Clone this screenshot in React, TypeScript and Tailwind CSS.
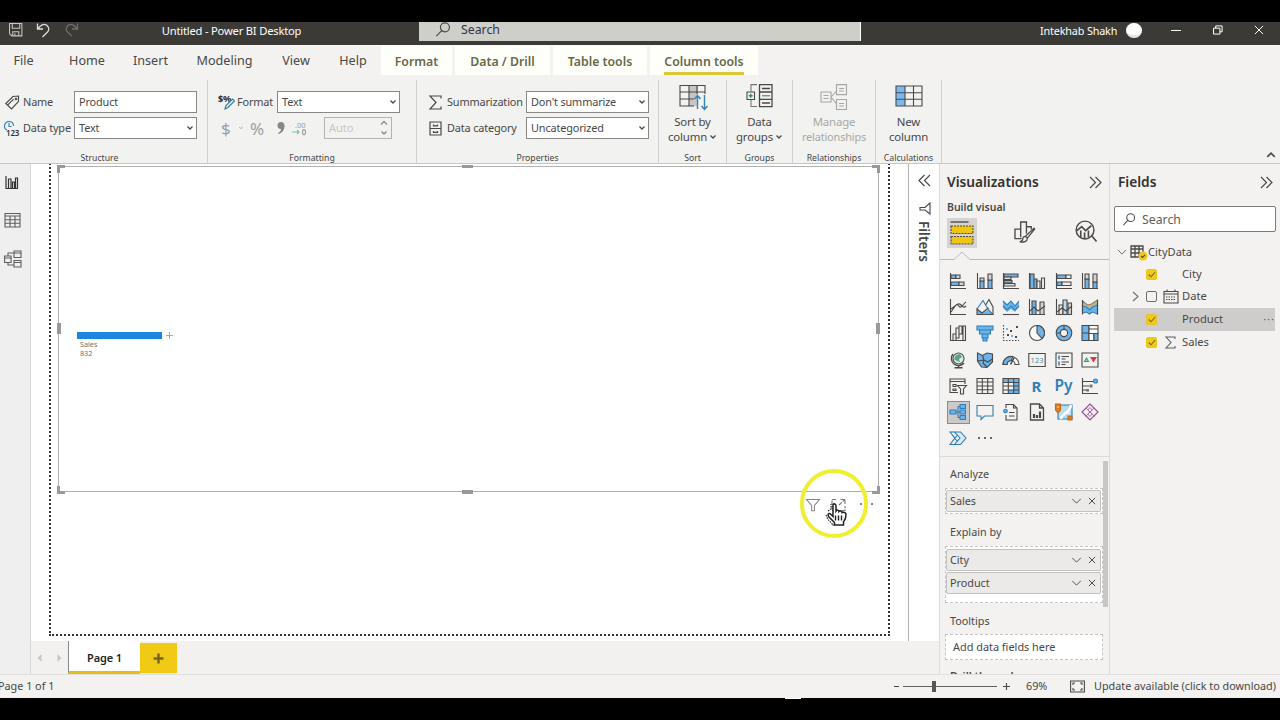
import type { ReactNode } from 'react';
import { clsx } from 'clsx';

const INK = '#4a4948';
const BLUE = '#6bb3ea';
const BLUE_DARK = '#2e7fb8';

type IconProps = {
  children: ReactNode;
  className?: string;
  stroke?: string;
  box?: string;
};

function Icon({ children, className = 'h-[18px] w-[18px]', stroke = INK, box = '0 0 18 18' }: IconProps) {
  return (
    <svg className={clsx('block shrink-0 overflow-visible', className)} viewBox={box} fill="none" stroke={stroke} strokeWidth={1.1}>
      {children}
    </svg>
  );
}

function Caret({ className = 'h-1.5 w-2', up = false }: { className?: string; up?: boolean }) {
  return (
    <Icon className={className} box="0 0 8 6">
      <path d={up ? 'M1 4.5l3-3 3 3' : 'M1.5 1.5L4 4l2.5-2.5'} strokeWidth={1.3} />
    </Icon>
  );
}

function DoubleChevron({ flip = false }: { flip?: boolean }) {
  return (
    <Icon className={clsx('h-[13px] w-[13px]', flip && 'rotate-180')} box="0 0 13 13">
      <path d="M1 1l5.5 5.5L1 12M6.5 1L12 6.5 6.5 12" strokeWidth={1.2} />
    </Icon>
  );
}

function SearchGlyph({ className }: { className: string }) {
  return (
    <Icon className={className} box="0 0 14 14">
      <circle cx="8.8" cy="5" r="4.2" />
      <path d="M5.8 8L.8 13.2" />
    </Icon>
  );
}

function TitleBar() {
  return (
    <header className="flex h-[23px] bg-[#3b3a36] text-white">
      <div className="flex w-[100px] items-start gap-[13px] pl-[9px] pt-px">
        <Icon className="h-[14px] w-[14px]" stroke="#c8c6c4" box="0 0 15 15">
          <path d="M.6.6h13.2v13.2H3L.6 11.5zM3.500.6v5h8V.6M4 13.800V9.300h6.500v4.500M6.300 11v2.800" />
        </Icon>
        <Icon className="h-[15px] w-[15px]" stroke="#e1dfdd" box="0 0 15 15">
          <path d="M1.500 .500v5.500h5.500M1.500 6C4.500 2 8 0 11 2.500c3 2.700 2 5.500-.500 7.500L6.500 14" strokeWidth={1.3} />
        </Icon>
        <Icon className="h-[15px] w-[15px]" stroke="#6f6e6b" box="0 0 15 15">
          <path d="M13.500 .500v5.500H8M13.500 6C10.500 2 7 0 4 2.500c-3 2.700-2 5.500.500 7.500L8 13" strokeWidth={1.3} />
        </Icon>
      </div>
      <div className="w-[263px] text-center text-[11.2px] leading-[18px] tracking-[-0.2px]">Untitled - Power BI Desktop</div>
      <div className="ml-14 flex h-[19px] w-[442px] items-start gap-[10px] border-r border-white bg-[#cfcfca] pl-4 text-[#33334a]">
        <SearchGlyph className="h-[15px] w-4" />
        <span className="text-[12.3px] leading-4">Search</span>
      </div>
      <div className="ml-[179px] w-[80px] whitespace-nowrap text-[10.8px] leading-[17px] tracking-[-0.15px]">Intekhab Shakh</div>
      <div className="ml-[6px] mt-[1px] h-[15px] w-4 rounded-full border-b-[3px] border-[#e3e3ea] bg-white" />
      <div className="ml-[29px] mt-[8px] h-px w-[10px] bg-white" />
      <Icon className="ml-8 mt-[3px] h-[10px] w-[10px]" stroke="#fff" box="0 0 11 11">
        <path d="M.6 3.500h7v6.500h-7zM3 3.500V1h7v6.500H7.600" />
      </Icon>
      <Icon className="ml-[31px] mt-[3px] h-[10px] w-[10px]" stroke="#fff" box="0 0 11 11">
        <path d="M1 1l9 9M10 1l-9 9" />
      </Icon>
    </header>
  );
}

const CONTEXT_TABS = [
  { label: 'Format', width: 'w-[71px]' },
  { label: 'Data / Drill', width: 'w-[95px]' },
  { label: 'Table tools', width: 'w-[94px]' },
  { label: 'Column tools', width: 'w-[108px]' },
];

const MENU_TABS = [
  { label: 'File', width: 'w-[47px] mr-2' },
  { label: 'Home', width: 'w-16' },
  { label: 'Insert', width: 'w-[63px]' },
  { label: 'Modeling', width: 'w-[85px]' },
  { label: 'View', width: 'w-[58px]' },
  { label: 'Help', width: 'w-14' },
];

function MenuTabs() {
  return (
    <nav className="flex h-[35px] border-t border-[#fafaf7] bg-[#f3f2f0] text-[12.6px] leading-[30px]">
      {MENU_TABS.map((tab) => (
        <div key={tab.label} className={clsx('text-center', tab.width)}>
          {tab.label}
        </div>
      ))}
      <div className="flex gap-[3px]">
        {CONTEXT_TABS.map((tab) => (
          <div key={tab.label} className={clsx('flex h-[29px] justify-center bg-[#fffffa] font-semibold text-[#66694a]', tab.width)}>
            <span
              className={clsx(
                'h-[29px] whitespace-nowrap text-[12.3px] leading-[31px]',
                tab.label === 'Column tools' && 'border-b-[3px] border-[#d8c832]',
              )}
            >
              {tab.label}
            </span>
          </div>
        ))}
      </div>
    </nav>
  );
}

function Group({ label, width, children }: { label: string; width: string; children: ReactNode }) {
  return (
    <section className={clsx('flex h-[83px] shrink-0 flex-col border-r border-[#d2d0ce]', width)}>
      <div className="h-[73px]">{children}</div>
      <div className="whitespace-nowrap text-center text-[8.7px] leading-[10px] text-[#484644]">{label}</div>
    </section>
  );
}

function Field({ icon, label, labelWidth, value, width, caret = true }: {
  icon: ReactNode;
  label: string;
  labelWidth: string;
  value: string;
  width: string;
  caret?: boolean;
}) {
  return (
    <div className="flex h-[22px] items-center text-[10.9px] tracking-[-0.15px]">
      <div className="w-[18px]">{icon}</div>
      <div className={clsx('whitespace-nowrap', labelWidth)}>{label}</div>
      <div className={clsx('flex h-[22px] items-center justify-between border border-[#8a8886] bg-white pl-[4px] pr-[2px]', width)}>
        {value}
        {caret && <Caret />}
      </div>
    </div>
  );
}

function BigButton({ icon, lines, caret = false, disabled = false }: {
  icon: ReactNode;
  lines: [string, string];
  caret?: boolean;
  disabled?: boolean;
}) {
  return (
    <div className={clsx('flex flex-col items-center pt-1 text-[11.4px] leading-[15px] tracking-[-0.15px]', disabled && 'text-[#a9a7a5]')}>
      <div className="mb-[2px] h-7">{icon}</div>
      <span>{lines[0]}</span>
      <span className={clsx('flex items-center gap-0.5 whitespace-nowrap', disabled && 'text-[10.9px]')}>
        {lines[1]}
        {caret && <Caret className="h-1.5 w-2" />}
      </span>
    </div>
  );
}

function Ribbon() {
  return (
    <div className="flex h-[84px] border-b border-[#c8c6c4] bg-[#f2f2f1]">
      <Group label="Structure" width="w-[208px] [&>div:last-child]:pr-2">
        <div className="flex flex-col gap-1 pl-[5px] pt-[11px]">
          <Field
            icon={
              <Icon className="h-[15px] w-[15px]" box="0 0 15 15">
                <path d="M.800 8.500L8 1.500l5.500-.500v5.500L6.500 14z" />
                <circle cx="11" cy="4" r=".8" />
                <path d="M2.600 10.200l6-6" />
              </Icon>
            }
            label="Name"
            labelWidth="w-[51px]"
            value="Product"
            width="w-[123px]"
            caret={false}
          />
          <Field
            icon={
              <Icon className="-ml-0.5 h-[17px] w-[17px]" box="0 0 17 17">
                <path d="M4 10A4.500 4.500 0 1 1 10.500 6M6 3v3.500h2.500" stroke={BLUE_DARK} />
                <text x="3" y="15.500" fontSize="8" fontWeight="600" fill="#333" stroke="none">
                  123
                </text>
              </Icon>
            }
            label="Data type"
            labelWidth="w-[51px]"
            value="Text"
            width="w-[123px]"
          />
        </div>
      </Group>
      <Group label="Formatting" width="w-[209px]">
        <div className="flex flex-col gap-1 pl-[11px] pt-[11px]">
          <Field
            icon={
              <Icon className="h-[17px] w-[17px]" box="0 0 17 17">
                <text x="-1" y="8" fontSize="9" fontWeight="800" fill="#333" stroke="none">
                  $%
                </text>
                <path d="M6 15l1-3.500L13.500 5 15.500 7 9 13.500z" fill="#d8edf5" stroke="#347d96" />
              </Icon>
            }
            label="Format"
            labelWidth="w-10"
            value="Text"
            width="w-[123px]"
          />
          <div className="flex h-[22px] items-center text-[#a09e9c]">
            <span className="w-[19px] pl-0.5 text-[17px] leading-none">$</span>
            <Caret className="h-1 w-1.5 opacity-50" />
            <span className="ml-1.5 w-[27px] text-[17px] leading-none">%</span>
            <svg className="h-3 w-2 shrink-0" viewBox="0 0 8 12" fill="#8a8886">
              <path d="M4 0a3.500 3.500 0 0 1 3.500 4C7.500 8 5 11 1.500 12l-.500-1c2-1 3-2.500 3-4A3.500 3.500 0 1 1 4 0z" />
            </svg>
            <Icon className="ml-[7px] h-[15px] w-[15px]" box="0 0 15 15">
              <text x="3" y="7" fontSize="7.5" fill="#a09e9c" stroke="none">
                .00
              </text>
              <path d="M0 11h7M5 9l2 2-2 2" stroke="#7fc0ae" />
              <ellipse cx="12" cy="11.200" rx="1.500" ry="2.600" stroke="#a09e9c" />
            </Icon>
            <div className="ml-[17px] flex h-[22px] w-[68px] items-center justify-between border border-[#b5b3b1] pl-1 pr-[3px] text-[11px] text-[#c8c6c4]">
              Auto
              <span className="flex flex-col gap-1 opacity-60">
                <Caret up />
                <Caret />
              </span>
            </div>
          </div>
        </div>
      </Group>
      <Group label="Properties" width="w-[242px]">
        <div className="flex flex-col gap-1 pl-[12px] pt-[11px]">
          <Field
            icon={
              <Icon className="h-[15px] w-[13px]" box="0 0 13 15">
                <path d="M12 3.500V1H1l6 6.500L1 14h11v-2.500" strokeWidth={1.200} />
              </Icon>
            }
            label="Summarization"
            labelWidth="w-[79px]"
            value="Don't summarize"
            width="w-[123px]"
          />
          <Field
            icon={
              <Icon className="h-[15px] w-[13px]" box="0 0 13 15">
                <path d="M1 1h11v13H1zM1 7.500h11M4.500 3.500v1.300h4V3.500M4.500 10v1.300h4V10" strokeWidth={1.200} />
              </Icon>
            }
            label="Data category"
            labelWidth="w-[79px]"
            value="Uncategorized"
            width="w-[123px]"
          />
        </div>
      </Group>
      <Group label="Sort" width="w-[68px]">
        <BigButton
          lines={['Sort by', 'column']}
          caret
          icon={
            <Icon className="h-7 w-[30px]" box="0 0 30 28">
              <path d="M11 1h9v21h-9z" fill="#c8c6c4" stroke="none" />
              <path d="M27 10V1.500H2V22h14M2 8h25M2 15h14M11 1.500V22M19 1.500V10" />
              <path d="M19.500 25V12M16.500 15l3-3.500 3 3.500M26.500 11v14M23.500 22l3 3.500 3-3.500" stroke="#3784ae" strokeWidth={1.400} />
            </Icon>
          }
        />
      </Group>
      <Group label="Groups" width="w-[66px]">
        <BigButton
          lines={['Data', 'groups']}
          caret
          icon={
            <Icon className="h-7 w-7" box="0 0 28 28">
              <path d="M13.500.600h12.500v22H13.500zM13.500 8h12.500M13.500 15.300h12.500M16 4.500h8M16 19h8" strokeWidth={1.300} />
              <path d="M16 11.800h8" stroke="#37866d" />
              <path d="M11 .600H5v7M11 22.500H5v-7" stroke="#777" />
              <path d="M1 8h7.500v7.500H1z" />
              <path d="M4.700 9.800v4M2.700 11.800h4" stroke="#37866d" strokeWidth={1.400} />
            </Icon>
          }
        />
      </Group>
      <Group label="Relationships" width="w-[83px]">
        <BigButton
          lines={['Manage', 'relationships']}
          disabled
          icon={
            <Icon className="h-7 w-7" box="0 0 28 28" stroke="#a8a6a4">
              <path d="M1 8h10v10H1zM16.500.600h10v10h-10zM16.500 15.500h10v10h-10zM3.500 14.500h5M19 7h5M19 22h5M3.500 11.500h5M19 4.500h5M19 19.500h5M11 13l5.500-6M11 13l5.500 7" />
            </Icon>
          }
        />
      </Group>
      <Group label="Calculations" width="w-[66px]">
        <BigButton
          lines={['New', 'column']}
          icon={
            <Icon className="h-7 w-7" box="0 0 28 28">
              <path d="M1 2h9v20H1z" fill="#78baf0" stroke="none" />
              <path d="M1 2h26v20H1zM1 8.700h26M1 15.300h26M10 2v20M18.500 2v20" />
            </Icon>
          }
        />
      </Group>
      <div className="flex flex-1 items-end justify-end pb-1 pr-1">
        <Caret className="h-2 w-2.5" up />
      </div>
    </div>
  );
}

function ViewRail() {
  return (
    <aside className="flex w-[31px] shrink-0 flex-col gap-[21px] border-r border-[#d8d6d4] bg-[#f0efef] pl-1 pt-[10px]">
      <Icon className="h-[17px] w-[17px]" box="0 0 17 17" stroke="#333">
        <path d="M2 2v12.500h12M4.500 14V5H7V14M8.500 14V8h2v6M11.500 14V4h2v10" strokeWidth={1.200} />
      </Icon>
      <Icon className="h-[17px] w-[17px]" box="0 0 17 17" stroke="#605e5c">
        <path d="M1 1.500h15v13.500H1zM1 4h15M1 7.700h15M1 11.300h15M6 4v11M11 4v11" />
      </Icon>
      <Icon className="h-[18px] w-[18px]" box="0 0 18 18" stroke="#605e5c">
        <path d="M.600 6h6.500v6.500H.600zM10 1h7v6.500h-7zM10 10.500h7V17h-7zM.600 8h6.500M10 3h7M10 12.500h7M4 6V3h6M4 12.500V15h6" />
      </Icon>
    </aside>
  );
}

const HANDLES = [
  '-left-[2px] -top-[2px] h-2 w-2 border-l-[3px] border-t-[3px]',
  '-right-[2px] -top-[2px] h-2 w-2 border-r-[3px] border-t-[3px]',
  '-left-[2px] -bottom-[3px] h-2 w-2 border-l-[3px] border-b-[3px]',
  '-right-[2px] -bottom-[3px] h-2 w-2 border-r-[3px] border-b-[3px]',
  'left-[403px] -top-[2px] h-[3px] w-[11px] border-t-[3px]',
  'left-[403px] -bottom-[3px] h-1 w-[11px] border-b-4',
  '-left-[2px] top-[156px] h-[11px] w-1 border-l-4',
  '-right-[2px] top-[156px] h-[11px] w-1 border-r-4',
];

function Canvas() {
  return (
    <main className="relative h-[477px] w-[877px] shrink-0 overflow-hidden bg-white">
      <div className="absolute -top-1 left-[18px] h-[476px] w-[841px] border-2 border-dotted border-[#333]" />
      <div className="absolute left-[27px] top-[2px] h-[326px] w-[821px] border border-[#b0b0b0]">
        {HANDLES.map((handle) => (
          <span key={handle} className={clsx('absolute border-[#999]', handle)} />
        ))}
        <div className="absolute left-[18px] top-[165px] h-[7px] w-[85px] bg-[#1a86e2]" />
        <svg className="absolute left-[106px] top-[164px] h-[9px] w-[9px]" viewBox="0 0 9 9" stroke="#aaa" strokeWidth={1}>
          <path d="M4.500 1v7M1 4.500h7" />
        </svg>
        <div className="absolute left-[21px] top-[173px] text-[7.200px] leading-[9px] text-[#706e6c]">
          Sales
          <br />
          832
        </div>
      </div>
      <Icon className="absolute left-[774px] top-[334px] h-[15px] w-4" box="0 0 17 16" stroke="#8a8886">
        <path d="M1.500 1.500h14L10 8v5.500H7V8z" />
      </Icon>
      <Icon className="absolute left-[799px] top-[334px] h-[14px] w-4" box="0 0 16 14" stroke="#777">
        <path d="M6 1.500H2v11h13V8M9 7l6-5.500M10.500 1.500H15V6" strokeDasharray="4 1" />
      </Icon>
      <div className="absolute left-[829px] top-[339px] flex gap-[9px]">
        <span className="h-0.5 w-0.5 bg-[#888]" />
        <span className="h-0.5 w-0.5 bg-[#888]" />
      </div>
      <div className="absolute left-[769px] top-[305px] h-[69px] w-[68px] rounded-full border-4 border-[#f0ee30]" />
      <Icon className="absolute left-[794px] top-[338px] h-[24px] w-[24px]" box="0 0 24 24" stroke="#222">
        <path
          d="M8 2.500c1.500-1.500 3 0 3 1.500v5c1-1.500 3-1 3 .500 1-1 3-.500 3 1 1.500-.800 4 0 4 2 0 4-.500 5-2.500 7.500V23h-9v-2.500L4 15c-2-3 0-4.500 2-2.500l2 2z"
          fill="#fff"
          strokeWidth={1.500}
        />
        <path d="M10.500 13.500v5M13.500 13.500v5M16.500 13.500v5" strokeWidth={1.400} />
        <path d="M1 13l2 4.500 4 4V23h3M3 9l3-2V2" strokeDasharray="1.500 1" />
      </Icon>
    </main>
  );
}

function FiltersRail() {
  return (
    <aside className="flex w-[31px] shrink-0 flex-col items-center border-l border-[#b3b0ad] bg-white pt-[10px]">
      <DoubleChevron flip />
      <Icon className="ml-0.5 mt-[15px] h-[13px] w-3" box="0 0 12 13">
        <path d="M11 1v11L6 8H1V5.500h5z" />
      </Icon>
      <span className="mt-[6px] text-[13.500px] font-semibold leading-4 [writing-mode:vertical-rl]">Filters</span>
    </aside>
  );
}

function PageTabs() {
  return (
    <div className="flex h-[33px] bg-[#f2f1f0]">
      <div className="flex w-[37px] items-center justify-between px-[6px]">
        <Icon className="h-2 w-[5px]" box="0 0 5 8" stroke="none">
          <path d="M4.500 0v8L.500 4z" fill="#cac8c6" />
        </Icon>
        <Icon className="h-2 w-[5px]" box="0 0 5 8" stroke="none">
          <path d="M.500 0v8l4-4z" fill="#cac8c6" />
        </Icon>
      </div>
      <div className="h-[33px] w-[72px] border-b-[3px] border-l border-b-[#e6bd18] border-l-[#888] bg-white text-center text-[11px] font-semibold leading-[34px] tracking-[-0.15px] text-[#252423]">
        Page 1
      </div>
      <div className="mt-0.5 flex h-[30px] w-[37px] items-center justify-center bg-[#f0ca14]">
        <Icon className="h-[11px] w-[11px]" box="0 0 11 11" stroke="#75672a">
          <path d="M5.500.500v10M.500 5.500h10" strokeWidth={2.500} />
        </Icon>
      </div>
    </div>
  );
}

const AXIS = 'M1.500 1v15.500H17';

const VISUALS: { name: string; art: ReactNode }[] = [
  {
    name: 'stacked bar',
    art: (
      <>
        <path d="M2 3h5v3.500H2zM2 10h8v3.500H2z" fill={BLUE} />
        <path d="M7 3h4v3.500H7zM10 10h5v3.500h-5z" fill="#d5d3d1" />
        <path d={AXIS} />
      </>
    ),
  },
  {
    name: 'stacked column',
    art: (
      <>
        <path d="M4 9h4v7.500H4zM12 8h4v8.500h-4z" fill={BLUE} />
        <path d="M4 6h4v3H4zM12 2h4v6h-4z" fill="#d5d3d1" />
        <path d={AXIS} />
      </>
    ),
  },
  {
    name: 'clustered bar',
    art: (
      <>
        <path d="M2 2h14v3H2zM2 8.500h8v2.500H2z" fill={BLUE} />
        <path d="M2 5h7v2.500H2zM2 11.500h11V14H2z" fill="#e6e0d0" />
        <path d={AXIS} />
      </>
    ),
  },
  {
    name: 'clustered column',
    art: (
      <>
        <path d="M2 2h4v14.500H2zM6 7h3v9.500H6z" fill={BLUE} />
        <path d="M9 9h3v7.500H9zM13.500 6h3v10.500h-3z" fill="#eee" />
        <path d={AXIS} />
      </>
    ),
  },
  {
    name: 'full stacked bar',
    art: (
      <>
        <path d="M2 3h9v3.500H2zM2 10h5v3.500H2z" fill={BLUE} />
        <path d="M11 3h5v3.500h-5zM7 10h9v3.500H7z" fill="#eee" />
        <path d={AXIS} />
      </>
    ),
  },
  {
    name: 'full stacked column',
    art: (
      <>
        <path d="M4 7h4v9.500H4zM12 10h4v6.500h-4z" fill={BLUE} />
        <path d="M4 2h4v5H4zM12 2h4v8h-4z" fill="#d5d3d1" />
        <path d={AXIS} />
      </>
    ),
  },
  {
    name: 'line',
    art: (
      <>
        <path d={AXIS} />
        <path d="M2 14l5-7c2-2 3 3 5 2s3-4 5-5M2 11l4-3c2-2 4-3 6-1s3 3 5 1" />
      </>
    ),
  },
  {
    name: 'area',
    art: (
      <>
        <path d="M7 16l5.500-14L17 12v4z" fill="#eee" stroke="none" />
        <path d="M1 11l5.500 4 5.500-3 5 4.500H1z" fill={BLUE} stroke="none" />
        <path d="M1 11l6-8.500L12.500 12l4.500 4.500" stroke={BLUE_DARK} />
        <path d="M9.500 7L13 1.500l4 7.500v7.500H1V11l5 4 6.500-5" />
      </>
    ),
  },
  {
    name: 'stacked area',
    art: (
      <>
        <path d="M1 3l4 4 4-4 4 5 4-5v6l-4 5-4-3-4 3-4-4z" fill={BLUE} stroke="none" />
        <path d="M1 3l4 4 4-4 4 5 4-5M1 8l4 4 4-4 4 4 4-4" stroke={BLUE_DARK} />
        <path d="M1 16.500h16" />
      </>
    ),
  },
  {
    name: 'line and column',
    art: (
      <>
        <path d="M4 3h4v13.500H4z" fill={BLUE} />
        <path d="M12 4h4v12.500h-4z" fill="#d5d3d1" />
        <path d={AXIS} />
        <path d="M2 13l4-4 4 4 7-5" />
      </>
    ),
  },
  {
    name: 'line and clustered column',
    art: (
      <>
        <path d="M4 7h4v9.500H4z" fill="#e5e3e1" />
        <path d="M8 2h4v14.500H8z" fill="#bcdcf3" />
        <path d="M13 5h3.500v11.500H13z" fill="#d5d3d1" />
        <path d={AXIS} />
        <path d="M2 14l5-4 4 3 6-5" />
      </>
    ),
  },
  {
    name: 'ribbon',
    art: (
      <>
        <path d="M1.500 3l5 4 4-1 6-4v6l-5 5-4-1-6 1z" fill="#c6b48f" stroke="#8a8060" />
        <path d="M1.500 8l4 1 3 3 3-3 5-2v9l-5-2-3 2-3-2-4 1z" fill={BLUE} stroke={BLUE_DARK} />
        <path d="M1.500 2v14.500M16.500 2v14.500" />
      </>
    ),
  },
  {
    name: 'waterfall',
    art: (
      <>
        <path d="M4 10h3v6.500H4zM7 4h3v10H7zM10 2h3v8h-3zM14 2h2.500v14.500H14z" fill="#eee" />
        <path d={AXIS} />
      </>
    ),
  },
  {
    name: 'funnel',
    art: (
      <path d="M1 2h16v4H1zM3.500 6h11v4h-11zM6 10h6v4H6zM7 14h4v3H7z" fill={BLUE} stroke={BLUE_DARK} />
    ),
  },
  {
    name: 'scatter',
    art: (
      <>
        <path d={AXIS} strokeDasharray="1.500 1.500" />
        <path d="M5 10h2v2H5zM8 6h2v2H8zM14 2h2v2h-2zM13 12h2v2h-2z" fill={INK} stroke="none" />
        <path d="M9 11h2v2H9zM4 4h2v2H4z" fill={BLUE} stroke="none" />
      </>
    ),
  },
  {
    name: 'pie',
    art: (
      <>
        <circle cx="9" cy="9" r="7.500" fill="#fafafa" />
        <path d="M9 1.500a7.500 7.500 0 0 1 5 13L9 9z" fill={BLUE} />
      </>
    ),
  },
  {
    name: 'donut',
    art: (
      <>
        <circle cx="9" cy="9" r="5.800" stroke={BLUE} strokeWidth={4} />
        <circle cx="9" cy="9" r="7.800" />
        <circle cx="9" cy="9" r="3.600" fill="#f3f2f1" />
        <path d="M9 1.200v4.200M1.500 9h4" />
      </>
    ),
  },
  {
    name: 'treemap',
    art: (
      <>
        <path d="M1 1.500h7v15H1z" fill={BLUE} />
        <path d="M8 1.500h9v8H8zM8 9.500h5v7H8z" fill="#fff" />
        <path d="M13 9.500h4v7h-4zM8 5h9M1 9h7" fill={BLUE} />
      </>
    ),
  },
  {
    name: 'map',
    art: (
      <>
        <circle cx="9.500" cy="7.500" r="5.500" fill="#d9eee3" />
        <path d="M7 4l4-1 2 3-3 2 1 3-3-1-3-2z" fill="#5fa287" stroke="none" />
        <path d="M4 3a7 7 0 1 0 11 9M9.500 14.500v2M5.500 16.700h8" strokeWidth={1.400} />
      </>
    ),
  },
  {
    name: 'filled map',
    art: (
      <>
        <path d="M1.500 2l5 2.500L11 2l5.500 1v8L11 16.500 5.500 16l-4-6z" fill={BLUE} />
        <path d="M6.500 4.500L8 9l-6.500 1M8 9l4 2 4.500-3M8 9l-1 3 4 4" />
      </>
    ),
  },
  {
    name: 'gauge',
    art: (
      <>
        <path d="M1 13.500a8 8 0 0 1 16 0h-4a4 4 0 0 0-8 0z" fill="#f5f5f5" />
        <path d="M1 13.500a8 8 0 0 1 10-7.800l-2 4a4 4 0 0 0-4 3.800z" fill={BLUE} />
        <path d="M8.500 13.500L12 7" strokeWidth={1.500} />
      </>
    ),
  },
  {
    name: 'card',
    art: (
      <>
        <path d="M.800 2.500h16.400v13H.800z" />
        <text x="2.600" y="12" fontSize="7.500" fill="#5b8799" stroke="none">
          123
        </text>
      </>
    ),
  },
  {
    name: 'multi-row card',
    art: (
      <>
        <path d="M1 2h16v14.500H1z" />
        <path d="M4 4.500v4M4 10.500v4" stroke={BLUE_DARK} strokeWidth={1.500} />
        <path d="M6.500 5.500H14M6.500 8h4M6.500 11h7.500M6.500 13.500h4" />
      </>
    ),
  },
  {
    name: 'kpi',
    art: (
      <>
        <path d="M1 2h16v14H1z" />
        <path d="M3.500 10.500l2-3.500 2 3.500z" fill="#a5d3bb" stroke="#3f9a6c" />
        <path d="M10 6.500h5l-2.500 4z" fill="#cf3f4b" stroke="#cf3f4b" />
      </>
    ),
  },
  {
    name: 'slicer',
    art: (
      <>
        <path d="M9 15.500H1V2h15v5M1 4.500h15M4 7.500h3v2H4zM4 12h3v1.500H4z" />
        <path d="M8.500 8.500h9L14.500 12v5h-3v-5z" fill="#f3f2f1" />
      </>
    ),
  },
  {
    name: 'table',
    art: <path d="M1 1.500h16v15H1zM1 5h16M1 9h16M1 12.800h16M6.300 1.500v15M11.700 1.500v15" />,
  },
  {
    name: 'matrix',
    art: (
      <>
        <path d="M1 1.500h16v4H1zM11.500 5.500H17v11h-5.500zM6 13h5.500v3.500H6z" fill={BLUE} stroke="none" />
        <path d="M1 1.500h16v15H1zM1 5.500h16M1 9h16M1 13h16M6.300 1.500v15M11.700 1.500v15" />
      </>
    ),
  },
  {
    name: 'r visual',
    art: (
      <text x="3.500" y="14.500" fontSize="15" fontWeight="700" fill={BLUE_DARK} stroke="none">
        R
      </text>
    ),
  },
  {
    name: 'python visual',
    art: (
      <text x="-.500" y="14" fontSize="15.500" fontWeight="600" fill={BLUE_DARK} stroke="none">
        Py
      </text>
    ),
  },
  {
    name: 'key influencers',
    art: (
      <>
        <path d={AXIS} />
        <path d="M2 4.500h10M2 9h6M2 13h3" />
        <circle cx="14.500" cy="4" r="2" stroke={BLUE_DARK} fill={BLUE} />
        <path d="M8.500 7.500h3v3h-3zM5 12h3v2.500H5z" fill="#777" stroke="none" />
      </>
    ),
  },
  {
    name: 'decomposition tree',
    art: (
      <>
        <path d="M1 7h6v4H1zM11 1.500h5.500v4H11zM11 7h5.500v4H11zM11 12.500h5.500v4H11z" fill={BLUE} stroke={BLUE_DARK} />
        <path d="M7 9h4M9 9V3.500h2M9 9v5.500h2" stroke={BLUE_DARK} />
      </>
    ),
  },
  {
    name: 'q and a',
    art: <path d="M1 2.500h16v10.500H8.500L5 16.500V13H1z" stroke="#347fae" />,
  },
  {
    name: 'narrative',
    art: (
      <>
        <path d="M4 5V1.500h7.500L15 5v12H4v-5M11.500 1.500V5H15M7 9.500h5.500M7 13h5.500" />
        <circle cx="3.500" cy="8" r="1.800" stroke={BLUE_DARK} fill={BLUE} />
      </>
    ),
  },
  {
    name: 'paginated report',
    art: (
      <>
        <path d="M2.500 1h9l4 4v12h-13zM11.500 1v4h4" strokeWidth={1.300} />
        <path d="M6 15v-4M9 15v-3M12 15V8.500" strokeWidth={2.200} />
      </>
    ),
  },
  {
    name: 'arcgis map',
    art: (
      <>
        <path d="M3 2h14v14H3z" fill="#b5dcf3" stroke={BLUE_DARK} />
        <path d="M6 16c0-6 9-5 10-14" stroke="#fff" strokeWidth={2.500} />
        <path d="M.500 1h5v6L3 10 .500 7zM13 13h4v4h-4z" fill="#dc7c22" stroke="#c56b18" />
        <path d="M2.500 3.500h1.200v1.200H2.500zM13 9.500h1.500V11H13z" fill="#fff" stroke="none" />
      </>
    ),
  },
  {
    name: 'power apps',
    art: (
      <>
        <path d="M9 1l8 8-8 8-8-8z" stroke="#9b4f96" strokeWidth={1.200} />
        <path d="M9 4.500L11.200 7 9 9.200 6.800 7zM9 13.500L11.200 11 9 8.800 6.800 11zM5 5l8.500 8.500M13 5l-8.500 8.500" stroke="#a863a3" strokeWidth={0.900} />
      </>
    ),
  },
  {
    name: 'power automate',
    art: (
      <>
        <path d="M5.500 3h6l5.500 6-5.500 6.500H5.500L11 9z" fill="#dcebf5" stroke={BLUE_DARK} />
        <path d="M5.500 3H1l5 6-5 6.500h4.500M1 3l7 9M1 15.500L8.500 6" stroke={BLUE_DARK} />
      </>
    ),
  },
];

function Chip({ label }: { label: string }) {
  return (
    <div className="flex h-[22px] shrink-0 items-center rounded-[2px] border border-[#c4c2c0] bg-[#ebeae9] pl-[3px] pr-[4px] text-[10.800px]">
      <span className="flex-1">{label}</span>
      <Icon className="mr-[6px] h-[6px] w-[11px]" box="0 0 12 7">
        <path d="M1 1l5 5 5-5" />
      </Icon>
      <Icon className="h-2 w-2" box="0 0 9 9">
        <path d="M1 1l7 7M8 1L1 8" />
      </Icon>
    </div>
  );
}

function Well({ title, className, children }: { title: string; className: string; children: ReactNode }) {
  return (
    <>
      <div className="pl-[5px] text-[10.800px] leading-[18px]">{title}</div>
      <div className={clsx('flex flex-col gap-[1px] border border-dashed border-[#c8c6c4] bg-white', className)}>{children}</div>
    </>
  );
}

function VisualizationsPane() {
  return (
    <aside className="flex w-[170px] shrink-0 flex-col overflow-hidden border-l border-[#dddbd9] bg-[#f3f2f1]">
      <div className="flex h-9 shrink-0 items-center justify-between pl-[7px] pr-[7px]">
        <h2 className="text-[13.700px] font-semibold text-[#323130]">Visualizations</h2>
        <DoubleChevron />
      </div>
      <div className="pl-[7px] text-[10.500px] font-semibold leading-[14px]">Build visual</div>
      <div className="flex items-start pl-[7px] pt-1">
        <div className="flex h-[30px] w-[30px] items-center justify-center bg-[#d6d4d2]">
          <Icon className="h-[26px] w-6" box="0 0 24 26">
            <path d="M.500 2h18" strokeWidth={2} stroke="#777" />
            <path d="M1 6h22v7.500H1zM1 16.500h22V24H1z" fill="#f0c514" strokeDasharray="2 1" />
          </Icon>
        </div>
        <Icon className="ml-[37px] mt-[3px] h-[22px] w-[22px]" box="0 0 23 23">
          <path d="M8 18.500H1V8.500h6V1h6v12M13 6h5v3M7 8.500V17" strokeWidth={1.400} />
          <path d="M21.500 7L12 16M22 8l-8 10M12 16c-2 0-3 2-3 4-1 1.500-2 1.500-3 1.500 4 1.500 8 0 8-3.500z" strokeWidth={1.300} />
        </Icon>
        <Icon className="ml-[39px] mt-[2px] h-[23px] w-[23px]" box="0 0 24 24">
          <circle cx="10.500" cy="10.500" r="9.300" strokeWidth={1.500} />
          <path d="M2 11l5-4 4 4 6-5M6 11v7M10 13v6M14 11v7M17 16l5.500 6.500" strokeWidth={1.700} />
        </Icon>
      </div>
      <svg className="block h-3 w-[169px] shrink-0" viewBox="0 0 169 12" fill="none" stroke="#bbb9b7">
        <path d="M0 11.500h14l8-7.500 8 7.500h139" />
      </svg>
      <div className="grid shrink-0 auto-rows-[26.200px] grid-cols-[repeat(6,26.400px)] pl-[5px] pt-2">
        {VISUALS.map((visual) => (
          <div key={visual.name} className="flex items-center justify-center">
            <div
              className={clsx(
                'flex h-[23px] w-[23px] items-center justify-center',
                visual.name === 'decomposition tree' && 'border border-[#8d8b89] bg-[#cccac9]',
              )}
            >
              <Icon>{visual.art}</Icon>
            </div>
          </div>
        ))}
        <div className="flex items-center justify-center gap-1">
          <span className="h-0.5 w-0.5 bg-[#666]" />
          <span className="h-0.5 w-0.5 bg-[#666]" />
          <span className="h-0.5 w-0.5 bg-[#666]" />
        </div>
      </div>
      <div className="mt-[5px] flex min-h-0 flex-1 border-t border-[#dcdad8]">
        <div className="w-[163px] overflow-hidden pl-[5px] pt-[8px]">
          <Well title="Analyze" className="mb-[9px] mt-[5px] h-[26px] py-px pr-px">
            <Chip label="Sales" />
          </Well>
          <Well title="Explain by" className="mb-[9px] mt-[5px] h-[57px] pr-px pt-[2px]">
            <Chip label="City" />
            <Chip label="Product" />
          </Well>
          <Well title="Tooltips" className="mb-[7px] mt-[4px] h-[26px]">
            <span className="pl-[7px] text-[10.900px] leading-6">Add data fields here</span>
          </Well>
          <div className="pl-[5px] text-[10.800px] font-semibold leading-[18px]">Drill through</div>
        </div>
        <div className="mt-[4px] h-[146px] w-[5px] bg-[#c9c7c6]" />
      </div>
    </aside>
  );
}

function Checkbox({ checked }: { checked: boolean }) {
  return (
    <span
      className={clsx(
        'flex h-[11px] w-[11px] shrink-0 items-center justify-center rounded-[2px] border',
        checked ? 'border-[#ebc51a] bg-[#f0ca1a]' : 'border-[#706e6c]',
      )}
    >
      {checked && (
        <Icon className="h-[7px] w-2" box="0 0 8 7">
          <path d="M.800 3.500L3 5.800 7.200 1" stroke="#77682a" />
        </Icon>
      )}
    </span>
  );
}

const FIELDS = [
  { name: 'City', checked: true },
  { name: 'Date', checked: false },
  { name: 'Product', checked: true },
  { name: 'Sales', checked: true },
];

function FieldsPane() {
  return (
    <aside className="flex-1 border-l border-[#dddbd9] bg-[#f3f2f1]">
      <div className="flex h-9 items-center justify-between pl-2 pr-[7px]">
        <h2 className="text-[13.700px] font-semibold text-[#323130]">Fields</h2>
        <DoubleChevron />
      </div>
      <div className="ml-[4px] mt-[6px] flex h-[26px] w-[162px] items-center gap-[6px] rounded-[2px] border border-[#7d7b79] bg-white pl-[7px] text-[12.300px] leading-[26px] text-[#605e5c]">
        <SearchGlyph className="h-[13px] w-[14px]" />
        <span className="pt-px">Search</span>
      </div>
      <div className="mt-[9px] flex h-[22px] items-center pl-[7px] text-[11.100px]">
        <Icon className="h-[6px] w-[10px]" box="0 0 11 7" stroke="#706e6c">
          <path d="M.800 1l4.700 5L10.200 1" />
        </Icon>
        <Icon className="ml-[3px] h-[18px] w-[18px]" box="0 0 18 18">
          <path d="M1 3h12v11H1zM1 6h12M1 10h12M5 3v11M9 3v11" strokeWidth={1.300} />
          <circle cx="13" cy="13" r="4.600" fill="#f0ca1a" stroke="none" />
          <path d="M11 13l1.500 1.500L15 12" />
        </Icon>
        <span>CityData</span>
      </div>
      {FIELDS.map((field) => (
        <div
          key={field.name}
          className={clsx('ml-[4px] flex h-[22.600px] w-[161px] items-center text-[11.200px]', field.name === 'Product' && 'bg-[#cfcdcc]')}
        >
          <div className="w-8 pl-[18px]">
            {field.name === 'Date' && (
              <Icon className="h-[11px] w-[7px]" box="0 0 7 11" stroke="#706e6c">
                <path d="M1 1l5 4.500L1 10" />
              </Icon>
            )}
          </div>
          <Checkbox checked={field.checked} />
          <div className="flex w-[25px] justify-center">
            {field.name === 'Date' && (
              <Icon className="ml-[3px] h-[15px] w-4" box="0 0 16 15">
                <path d="M1 2.500h14V14H1zM1 5h14M4 .500v2M12 .500v2" />
                <path d="M3 8h10M3 10.500h10" strokeDasharray="1.500 1" />
              </Icon>
            )}
            {field.name === 'Sales' && (
              <Icon className="ml-px h-[13px] w-[11px]" box="0 0 11 13" stroke="#605e5c">
                <path d="M10 3V1H1l5 5.500L1 12h9v-2" />
              </Icon>
            )}
          </div>
          <span className="flex-1">{field.name}</span>
          {field.name === 'Product' && <span className="text-[11px] tracking-[1px] text-[#605e5c]">···</span>}
        </div>
      ))}
    </aside>
  );
}

function StatusBar() {
  return (
    <footer className="flex h-6 items-center border-t border-[#e1dfdd] bg-[#f3f2f0] text-[10.800px] text-[#484644]">
      <div className="-ml-[2px] w-[896px] whitespace-nowrap">Page 1 of 1</div>
      <div className="h-[1.500px] w-[5px] bg-[#444]" />
      <div className="relative ml-[4px] h-px w-[94px] bg-[#605e5c]">
        <span className="absolute -top-[5px] left-[29px] h-[11px] w-1 bg-[#555]" />
      </div>
      <Icon className="ml-[6px] h-[7px] w-[7px]" box="0 0 7 7">
        <path d="M3.500 0v7M0 3.500h7" />
      </Icon>
      <div className="ml-4 w-[44px]">69%</div>
      <Icon className="h-[13px] w-[15px]" box="0 0 15 13">
        <path d="M.600 1h13.800v11H.600zM3 5V3h2M10 3h2v2M12 8v2h-2M5 10H3V8" />
      </Icon>
      <div className="ml-[9px] whitespace-nowrap text-[10.800px]">Update available (click to download)</div>
    </footer>
  );
}

export default function App() {
  return (
    <div className="h-[720px] w-[1280px] overflow-hidden bg-black pt-[22px] font-['Noto_Sans','Open_Sans',sans-serif] text-[#484746]">
      <TitleBar />
      <MenuTabs />
      <Ribbon />
      <div className="flex h-[510px]">
        <ViewRail />
        <div className="flex w-[908px] shrink-0 flex-col">
          <div className="flex h-[477px]">
            <Canvas />
            <FiltersRail />
          </div>
          <PageTabs />
        </div>
        <VisualizationsPane />
        <FieldsPane />
      </div>
      <StatusBar />
      <div className="ml-[785px] h-px w-4 bg-white" />
    </div>
  );
}
